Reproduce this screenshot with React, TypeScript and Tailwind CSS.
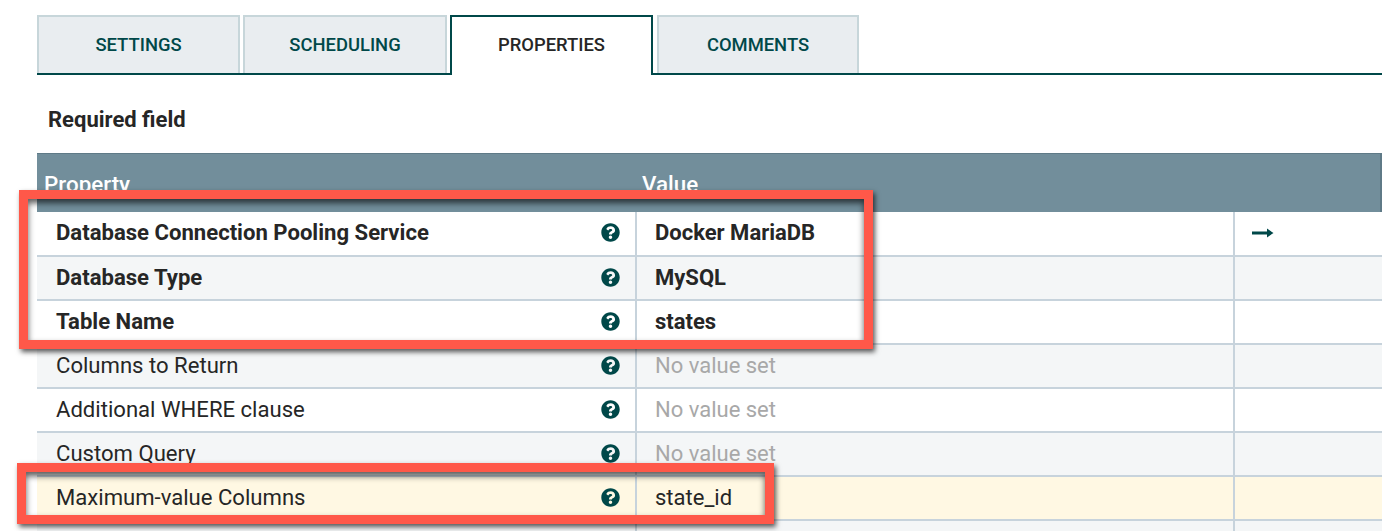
import { FaQuestionCircle } from "react-icons/fa";

const rows = [
  { name: "Database Connection Pooling Service", value: "Docker MariaDB", bold: true, arrow: true, height: "h-[45px]", bg: "bg-white" },
  { name: "Database Type", value: "MySQL", bold: true, bg: "bg-[#f4f6f7]" },
  { name: "Table Name", value: "states", bold: true, bg: "bg-white" },
  { name: "Columns to Return", value: "No value set", empty: true, bg: "bg-[#f4f6f7]" },
  { name: "Additional WHERE clause", value: "No value set", empty: true, bg: "bg-white" },
  { name: "Custom Query", value: "No value set", empty: true, bg: "bg-[#f4f6f7]" },
  { name: "Maximum-value Columns", value: "state_id", bg: "bg-[#fff8e3]" },
  { name: "", value: "", noIcon: true, bg: "bg-[#f4f6f7]" },
];

function Tab({ label, width, active }: { label: string; width: string; active?: boolean }) {
  if (active) {
    return (
      <div className={`${width} h-[60px] -mb-[2px] pb-[2px] relative z-10 flex items-center justify-center bg-white border-2 border-b-0 border-[#004849] text-[18.4px] font-medium text-[#262626]`}>
        {label}
      </div>
    );
  }
  return (
    <div className={`${width} h-[58px] flex items-center justify-center bg-[#e9edf0] border-2 border-b-0 border-[#c7d6da] text-[18.4px] font-medium text-[#004849]`}>
      {label}
    </div>
  );
}

function Row({ row }: { row: (typeof rows)[number] }) {
  const weight = row.bold ? "font-bold" : "font-normal";
  return (
    <div className={`flex ${row.height ?? "h-[44px]"} border-b-2 border-[#c7d3dc] ${row.bg}`}>
      <div className="w-[598px] pl-[19px] pr-[15px] pb-[2px] flex items-center justify-between">
        <span className={`text-[22.1px] leading-[33px] text-[#262626] ${weight}`}>{row.name}</span>
        {!row.noIcon && <FaQuestionCircle className="w-[19px] h-[19px] text-[#004849]" />}
      </div>
      <div className={`w-[598px] pl-[18px] pb-[2px] flex items-center border-l-2 border-[#c7d3dc] text-[22px] leading-[33px] ${weight} ${row.empty ? "text-[#a8a8a8]" : "text-[#262626]"}`}>
        {row.value}
      </div>
      <div className="flex-1 pl-[17px] pb-[2px] flex items-center border-l-2 border-[#c7d3dc]">
        {row.arrow && (
          <svg width="22" height="10" viewBox="0 0 22 10" className="text-[#004849]">
            <path d="M0 3.4h15V.6l6.5 4.4L15 9.4V6.6H0z" fill="currentColor" />
          </svg>
        )}
      </div>
    </div>
  );
}

export default function App() {
  return (
    <div className="relative h-[531px] overflow-hidden bg-white font-['Roboto',sans-serif]">
      <div className="pt-[15px] pl-[37px] pr-[18px]">
        <div className="flex gap-[3px] border-b-2 border-[#004849] h-[60px]">
          <Tab label="SETTINGS" width="w-[203px]" />
          <Tab label="SCHEDULING" width="w-[204px]" />
          <Tab label="PROPERTIES" width="w-[203px]" active />
          <Tab label="COMMENTS" width="ml-px w-[202px]" />
        </div>

        <div className="pl-[11px] pt-[32px] h-[78px] text-[22px] font-bold text-[#262626] leading-[26px]">Required field</div>

        <div className="flex h-[59px] bg-[#728e9b] border-t border-r-2 border-[#5f7a87] text-[22.4px] font-medium text-white">
          <div className="w-[598px] pl-[7px] pt-[14px]">Property</div>
          <div className="pl-[7px] pt-[14px]">Value</div>
        </div>

        {rows.map((row, i) => (
          <Row key={i} row={row} />
        ))}
      </div>

      {/* red highlight boxes drawn over the table */}
      <div className="absolute left-[19px] top-[190px] w-[854px] h-[159px] border-[9px] border-[#ff5849] shadow-[2px_3px_5px_rgba(0,0,0,0.65),inset_0_4px_6px_rgba(0,0,0,0.65)]" />
      <div className="absolute left-[17px] top-[463px] w-[757px] h-[61px] border-[9px] border-[#ff5849] shadow-[2px_3px_5px_rgba(0,0,0,0.65),inset_0_4px_6px_rgba(0,0,0,0.65)]" />
    </div>
  );
}
